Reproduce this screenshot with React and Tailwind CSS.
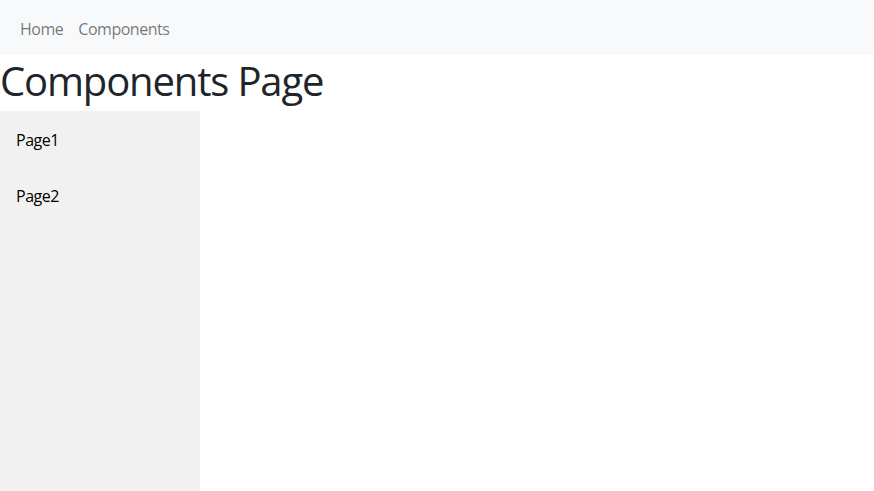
export default function App() {
  return (
    <div className="min-h-[491px] bg-white tracking-[-0.03em]" style={{ fontFamily: '"Open Sans", "Noto Sans", sans-serif' }}>
      <nav className="bg-[#f8f9fa] h-[55px] flex items-center px-3 pt-[2px]">
        <a href="#" className="px-2 py-2 text-[16px] leading-6 text-black/55">Home</a>
        <a href="#" className="pl-2 pr-2 py-2 -ml-[1px] text-[16px] leading-6 text-black/55">Components</a>
      </nav>
      <h1 className="text-[40px] leading-[48px] pt-[2px] mb-[6px] tracking-[-1.15px] text-[#212529] font-normal">Components Page</h1>
      <div className="w-[200px] h-[380px] bg-[#f1f1f1]">
        <a href="#" className="block pt-[17px] pb-[15px] px-4 text-[16px] leading-6 text-black">Page1</a>
        <a href="#" className="block pt-[17px] pb-[15px] px-4 text-[16px] leading-6 text-black">Page2</a>
      </div>
    </div>
  );
}
